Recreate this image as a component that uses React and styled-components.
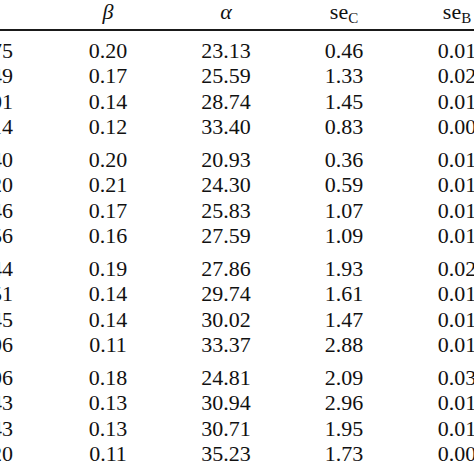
import React from "react";
import styled, { createGlobalStyle } from "styled-components";

const GlobalStyle = createGlobalStyle`
  html, body {
    margin: 0;
    padding: 0;
    background: #fff;
    overflow: hidden;
  }
  body {
    font-family: "Liberation Serif", "Times New Roman", serif;
    color: #111;
  }
`;

const groups = [
  [
    ["2.75", "0.20", "23.13", "0.46", "0.01"],
    ["2.49", "0.17", "25.59", "1.33", "0.02"],
    ["3.01", "0.14", "28.74", "1.45", "0.01"],
    ["3.14", "0.12", "33.40", "0.83", "0.00"],
  ],
  [
    ["2.40", "0.20", "20.93", "0.36", "0.01"],
    ["2.20", "0.21", "24.30", "0.59", "0.01"],
    ["2.46", "0.17", "25.83", "1.07", "0.01"],
    ["2.56", "0.16", "27.59", "1.09", "0.01"],
  ],
  [
    ["2.44", "0.19", "27.86", "1.93", "0.02"],
    ["2.51", "0.14", "29.74", "1.61", "0.01"],
    ["2.45", "0.14", "30.02", "1.47", "0.01"],
    ["2.96", "0.11", "33.37", "2.88", "0.01"],
  ],
  [
    ["2.96", "0.18", "24.81", "2.09", "0.03"],
    ["3.43", "0.13", "30.94", "2.96", "0.01"],
    ["3.43", "0.13", "30.71", "1.95", "0.01"],
    ["3.20", "0.11", "35.23", "1.73", "0.00"],
  ],
];

const Table = styled.div`
  display: flex;
  flex-direction: column;
  width: 505px;
`;

const Row = styled.div`
  display: grid;
  grid-template-columns: 49px 118px 118px 118px 102px;
  align-items: center;
  height: 25.5px;
  font-size: 22px;
  line-height: 1;
`;

const HeadRow = styled(Row)`
  border-bottom: 2px solid #1a1a1a;
  padding-bottom: 6px;
  box-sizing: border-box;
  height: 31px;
`;

const Group = styled.div`
  display: flex;
  flex-direction: column;
  margin-top: 7px;
`;

const Cell = styled.div`
  display: flex;
  justify-content: center;
  white-space: nowrap;
`;

const LabelCell = styled(Cell)`
  justify-content: flex-end;
  padding-right: 36px;
`;

const LastCell = styled(Cell)`
  padding-left: 6px;
`;

const Greek = styled.span`
  font-style: italic;
`;

const Se = styled.span`
  sub {
    font-size: 15px;
    vertical-align: -4px;
    line-height: 0;
  }
`;

export default function App() {
  return (
    <>
      <GlobalStyle />
      <Table>
        <HeadRow>
          <LabelCell />
          <Cell>
            <Greek>β</Greek>
          </Cell>
          <Cell>
            <Greek>α</Greek>
          </Cell>
          <Cell>
            <Se>
              se<sub>C</sub>
            </Se>
          </Cell>
          <LastCell>
            <Se>
              se<sub>B</sub>
            </Se>
          </LastCell>
        </HeadRow>
        {groups.map((rows, gi) => (
          <Group key={gi}>
            {rows.map((r, ri) => (
              <Row key={ri}>
                <LabelCell>{r[0]}</LabelCell>
                <Cell>{r[1]}</Cell>
                <Cell>{r[2]}</Cell>
                <Cell>{r[3]}</Cell>
                <LastCell>{r[4]}</LastCell>
              </Row>
            ))}
          </Group>
        ))}
      </Table>
    </>
  );
}
